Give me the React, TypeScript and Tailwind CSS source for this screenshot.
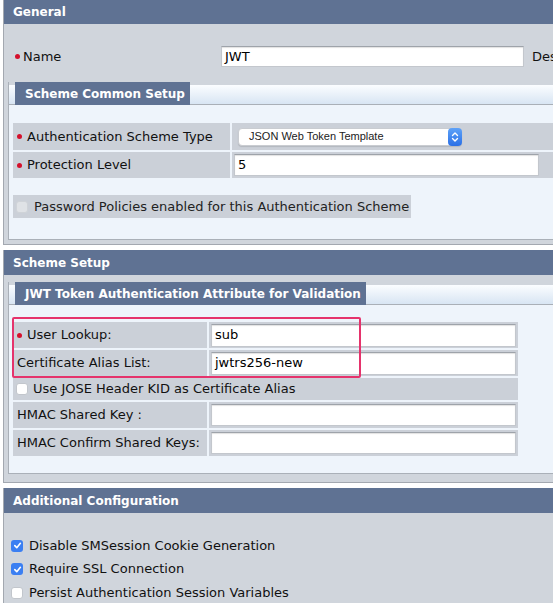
import type { ReactNode } from 'react';

// Legacy admin console form: "Authentication Scheme" edit page

const FONT = { fontFamily: '"DejaVu Sans", Verdana, sans-serif' };

function Bullet({ gap = 'mr-[5px]' }: { gap?: string }) {
  return <span className={`inline-block w-[5px] h-[5px] rounded-full bg-[#d4102c] ${gap}`} />;
}

function PanelHeader({ title, h = 'h-[25px]' }: { title: string; h?: string }) {
  return (
    <div className={`${h} flex items-center pl-[9px] bg-[#5f7293] text-white font-bold text-[12px]`}>
      {title}
    </div>
  );
}

function Panel({ title, children, first }: { title: string; children: ReactNode; first?: boolean }) {
  return (
    <div className="ml-[3px] w-[620px] border-l border-b border-[#a3a8b0] bg-[#d0d5dc] mb-[5px]">
      <PanelHeader title={title} h={first ? 'h-[24px]' : 'h-[25px]'} />
      {children}
    </div>
  );
}

function Fieldset({ legend, children }: { legend: string; children: ReactNode }) {
  return (
    <div className="ml-[4px] border-l border-b border-[#aab0b8]">
      {/* legend tab sits over a gradient strip */}
      <div className="flex h-[23px]">
        <div className="w-[6px] mt-[3px] bg-gradient-to-b from-[#fbfdff] to-[#d8e5f3] border-b border-[#a9afb7]" />
        <div className="flex items-center pl-[10px] pr-[5px] bg-[#5f7293] text-white font-bold text-[12px]">{legend}</div>
        <div className="flex-1 mt-[3px] bg-gradient-to-b from-[#fbfdff] to-[#d8e5f3] border-b border-[#a9afb7]" />
      </div>
      <div className="bg-[#eef4fb]">{children}</div>
    </div>
  );
}

function TextInput({ value = '', className = '' }: { value?: string; className?: string }) {
  return (
    <div
      className={`bg-white border border-[#c3c7cd] border-t-[#9ea3aa] shadow-[inset_0_1px_1px_rgba(0,0,0,0.12)] flex items-center px-[3px] text-[13px] text-black ${className}`}
    >
      {value}
    </div>
  );
}

function Checkbox({ checked, disabled }: { checked?: boolean; disabled?: boolean }) {
  if (checked) {
    return (
      <span className="inline-flex w-[12px] h-[12px] rounded-[3px] bg-[#3b7ff2] items-center justify-center shrink-0">
        <svg width="9" height="9" viewBox="0 0 10 10" fill="none">
          <path d="M2 5.2 L4.2 7.4 L8.2 2.6" stroke="white" strokeWidth="1.8" strokeLinecap="round" strokeLinejoin="round" />
        </svg>
      </span>
    );
  }
  return (
    <span
      className={`inline-block w-[12px] h-[12px] rounded-[3px] shrink-0 ${
        disabled ? 'bg-[#dfe2e6] border border-[#cfd3d8]' : 'bg-white border border-[#c2c6cc]'
      }`}
    />
  );
}

function SelectBox({ value }: { value: string }) {
  return (
    <div className="w-[224px] h-[18px] rounded-[4px] bg-white border border-[#c9ccd1] shadow-[0_1px_1px_rgba(0,0,0,0.12)] flex items-center justify-between pl-[10px]">
      <span className="text-[11px] text-[#222]" style={{ fontFamily: '"Liberation Sans", Arial, sans-serif' }}>
        {value}
      </span>
      <span className="w-[14px] h-[18px] -mr-px rounded-[4px] bg-gradient-to-b from-[#5ea2f8] to-[#2a6fe6] flex items-center justify-center">
        <svg width="8" height="12" viewBox="0 0 8 12" fill="none">
          <path d="M1.5 4.5 L4 2 L6.5 4.5 M1.5 7.5 L4 10 L6.5 7.5" stroke="white" strokeWidth="1.4" strokeLinecap="round" strokeLinejoin="round" />
        </svg>
      </span>
    </div>
  );
}

export default function App() {
  return (
    <div className="w-[553px] h-[603px] overflow-hidden bg-white text-[13px] text-[#111]" style={FONT}>
      <Panel title="General" first>
        <div className="pt-[22px] pb-[4px]">
          <div className="flex items-center h-[21px]">
            <div className="w-[217px] pl-[11px] flex items-center">
              <Bullet gap="mr-[3px]" />
              Name
            </div>
            <TextInput value="JWT" className="w-[303px] h-[21px]" />
            <span className="ml-[8px]">Description</span>
          </div>

          <div className="mt-[15px]">
            <Fieldset legend="Scheme Common Setup">
              <div className="pt-[18px] pb-[21px] pl-[4px]">
                <div className="flex flex-col gap-[2px]">
                  <div className="flex gap-[2px] h-[27px]">
                    <div className="w-[217px] bg-[#cbd0d8] flex items-center pl-[4px]">
                      <Bullet />
                      Authentication Scheme Type
                    </div>
                    <div className="flex-1 bg-[#cbd0d8] flex items-center pl-[6px]">
                      <SelectBox value="JSON Web Token Template" />
                    </div>
                  </div>
                  <div className="flex gap-[2px] h-[26px]">
                    <div className="w-[217px] bg-[#cbd0d8] flex items-center pl-[4px]">
                      <Bullet />
                      Protection Level
                    </div>
                    <div className="flex-1 bg-[#cbd0d8] flex items-center pl-[2px]">
                      <TextInput value="5" className="w-[305px] h-[22px]" />
                    </div>
                  </div>
                </div>
                <div className="mt-[17px] w-[398px] h-[23px] bg-[#cbd0d8] flex items-center pl-[3px] gap-[6px] text-[#222]">
                  <Checkbox disabled />
                  Password Policies enabled for this Authentication Scheme
                </div>
              </div>
            </Fieldset>
          </div>
        </div>
      </Panel>

      <Panel title="Scheme Setup">
        <div className="pt-[7px] pb-[8px]">
          <Fieldset legend="JWT Token Authentication Attribute for Validation">
            <div className="pt-[17px] pb-[17px] pl-[4px]">
              <div className="relative w-[505px] flex flex-col gap-[2px]">
                <div className="flex gap-[2px] h-[26px]">
                  <div className="w-[194px] bg-[#cbd0d8] flex items-center pl-[4px]">
                    <Bullet />
                    User Lookup:
                  </div>
                  <div className="flex-1 bg-[#cbd0d8] flex items-center px-[2px]">
                    <TextInput value="sub" className="w-full h-[23px]" />
                  </div>
                </div>
                <div className="flex gap-[2px] h-[26px]">
                  <div className="w-[194px] bg-[#cbd0d8] flex items-center pl-[4px]">Certificate Alias List:</div>
                  <div className="flex-1 bg-[#cbd0d8] flex items-center px-[2px]">
                    <TextInput value="jwtrs256-new" className="w-full h-[23px]" />
                  </div>
                </div>
                <div className="h-[22px] bg-[#cbd0d8] flex items-center pl-[3px] gap-[5px]">
                  <Checkbox />
                  Use JOSE Header KID as Certificate Alias
                </div>
                <div className="flex gap-[2px] h-[26px]">
                  <div className="w-[194px] bg-[#cbd0d8] flex items-center pl-[4px]">HMAC Shared Key :</div>
                  <div className="flex-1 bg-[#cbd0d8] flex items-center px-[2px]">
                    <TextInput className="w-full h-[22px]" />
                  </div>
                </div>
                <div className="flex gap-[2px] h-[26px]">
                  <div className="w-[194px] bg-[#cbd0d8] flex items-center pl-[4px]">HMAC Confirm Shared Keys:</div>
                  <div className="flex-1 bg-[#cbd0d8] flex items-center px-[2px]">
                    <TextInput className="w-full h-[22px]" />
                  </div>
                </div>
                {/* highlight drawn over the first two rows */}
                <div className="absolute left-[-1px] top-[-5px] w-[349px] h-[61px] border-2 border-[#e5336c] rounded-[2px] pointer-events-none" />
              </div>
            </div>
          </Fieldset>
        </div>
      </Panel>

      <Panel title="Additional Configuration">
        <div className="pt-[21px] pb-[10px] pl-[7px] flex flex-col">
          <div className="h-[23px] flex items-center gap-[6px]">
            <Checkbox checked />
            Disable SMSession Cookie Generation
          </div>
          <div className="h-[24px] flex items-center gap-[6px]">
            <Checkbox checked />
            Require SSL Connection
          </div>
          <div className="h-[24px] flex items-center gap-[6px]">
            <Checkbox />
            Persist Authentication Session Variables
          </div>
        </div>
      </Panel>
    </div>
  );
}
